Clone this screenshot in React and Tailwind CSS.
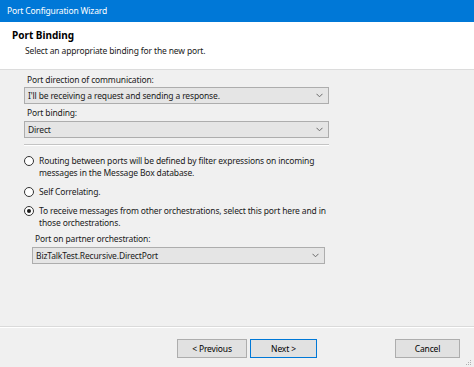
import React from 'react';

// Small combo box with a chevron on the right
const Combo = ({ text, className = '' }) => (
  <div className={`h-[17px] flex items-center justify-between bg-[#e5e5e5] border border-[#adadad] pl-[3px] pr-[5px] ${className}`}>
    <span className="leading-[12px] whitespace-nowrap">{text}</span>
    <svg width="7" height="5" viewBox="0 0 7 5" className="shrink-0">
      <path d="M0.5 0.8 L3.5 3.8 L6.5 0.8" fill="none" stroke="#6a6a6a" strokeWidth="1" />
    </svg>
  </div>
);

const Radio = ({ checked }) => (
  <span className="w-[10px] h-[10px] mt-[1px] rounded-full border border-[#333333] bg-white flex items-center justify-center shrink-0">
    {checked && <span className="w-[4px] h-[4px] rounded-full bg-[#1a1a1a]" />}
  </span>
);

const Button = ({ children, primary, className = '' }) => (
  <button
    className={`h-[19px] bg-[#e1e1e1] border ${primary ? 'border-[#0078d7]' : 'border-[#adadad]'} flex items-center justify-center leading-[12px] text-black ${className}`}
  >
    {children}
  </button>
);

export default function App() {
  return (
    <div className="w-[474px] h-[367px] flex flex-col bg-[#f0f0f0] font-['Segoe_UI','Noto_Sans',sans-serif] text-[8.5px] tracking-[-0.15px] leading-[12px] text-[#1a1a1a] overflow-hidden relative">
      {/* title bar */}
      <div className="h-[22px] shrink-0 bg-[#0078d7] text-white pl-[7px] flex items-center">
        Port Configuration Wizard
      </div>

      {/* header */}
      <div className="h-[48px] shrink-0 bg-white border-b border-[#dcdcdc] flex flex-col">
        <div className="pl-[12px] mt-[6px] font-bold text-[10px] tracking-normal leading-[14px] text-black">Port Binding</div>
        <div className="pl-[25px] mt-[3px]">Select an appropriate binding for the new port.</div>
      </div>

      {/* body */}
      <div className="flex-1 flex flex-col pl-[24px] pr-[145px]">
        <div className="mt-[4px] pl-[3px] h-[12px]">Port direction of communication:</div>
        <Combo className="mt-[1px]" text="I'll be receiving a request and sending a response." />
        <div className="mt-[3px] pl-[3px] h-[12px]">Port binding:</div>
        <Combo className="mt-[2px]" text="Direct" />
        <div className="mt-[6px] h-[2px] border-t border-[#c4c4c4] border-b border-b-white" />

        <div className="mt-[9px] flex gap-[5px] whitespace-nowrap">
          <Radio />
          <div>
            Routing between ports will be defined by filter expressions on incoming
            <br />
            messages in the Message Box database.
          </div>
        </div>
        <div className="mt-[7px] flex gap-[5px] whitespace-nowrap">
          <Radio />
          <div>Self Correlating.</div>
        </div>
        <div className="mt-[7px] flex gap-[5px] whitespace-nowrap">
          <Radio checked />
          <div>
            To receive messages from other orchestrations, select this port here and in
            <br />
            those orchestrations.
          </div>
        </div>

        <div className="mt-[4px] pl-[11px] h-[12px]">Port on partner orchestration:</div>
        <Combo className="mt-[2px] ml-[8px] mr-[4px]" text="BizTalkTest.Recursive.DirectPort" />
      </div>

      {/* footer */}
      <div className="h-[41px] shrink-0 border-t border-[#dadada]">
        <div className="h-[40px] border-t border-white flex items-start pt-[11px] pr-[14px]">
          <Button className="ml-[177px] w-[70px]">&lt; Previous</Button>
          <Button primary className="ml-[3px] w-[67px]">Next &gt;</Button>
          <Button className="ml-auto w-[65px]">Cancel</Button>
        </div>
      </div>

      {/* resize grip */}
      <svg width="8" height="8" viewBox="0 0 8 8" className="absolute right-[2px] bottom-[1px]">
        <rect x="6" y="2" width="1" height="1" fill="#b0b0b0" />
        <rect x="4" y="4" width="1" height="1" fill="#b0b0b0" />
        <rect x="6" y="4" width="1" height="1" fill="#b0b0b0" />
        <rect x="2" y="6" width="1" height="1" fill="#b0b0b0" />
        <rect x="4" y="6" width="1" height="1" fill="#b0b0b0" />
        <rect x="6" y="6" width="1" height="1" fill="#b0b0b0" />
      </svg>
    </div>
  );
}
